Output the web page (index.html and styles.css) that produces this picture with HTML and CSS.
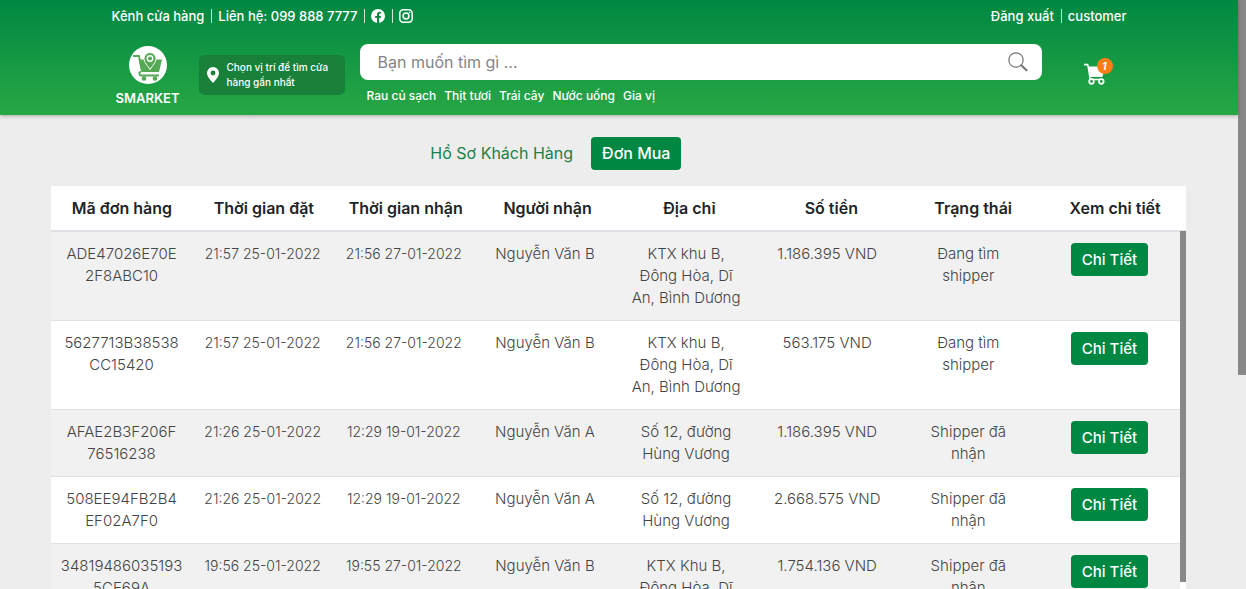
FILE: index.html
```html
<!DOCTYPE html>
<html lang="vi">
<head>
  <meta charset="UTF-8">
  <meta name="viewport" content="width=device-width, initial-scale=1">
  <title>SMARKET - Đơn Mua</title>
  <link rel="stylesheet" href="styles.css">
</head>
<body>
  <div class="page">
    <header class="header">
      <div class="grid">
        <nav class="navbar">
          <ul class="navbar-list">
            <li class="navbar-item"><a href="#">Kênh cửa hàng</a></li>
            <li class="navbar-item"><a href="#">Liên hệ: 099 888 7777</a></li>
            <li class="navbar-item">
              <a href="#" aria-label="Facebook">
                <svg class="navbar-icon" viewBox="0 0 14 14"><circle cx="7" cy="7" r="7" fill="#fff"/><path d="M6 14V9H4.200V7H6V5.500C6 3.700 7 2.800 8.600 2.800l1.400.1v1.700h-.9c-.8 0-1 .5-1 1V7h1.900l-.3 2H8.100v5z" fill="#078b43"/></svg>
              </a>
            </li>
            <li class="navbar-item">
              <a href="#" aria-label="Instagram">
                <svg class="navbar-icon" viewBox="0 0 14 14" fill="none" stroke="#fff" stroke-width="1.500"><rect x=".8" y=".8" width="12.400" height="12.400" rx="3.500"/><circle cx="7" cy="7" r="2.900"/><circle cx="10.600" cy="3.400" r=".9" fill="#fff" stroke="none"/></svg>
              </a>
            </li>
          </ul>
          <ul class="navbar-list">
            <li class="navbar-item"><a href="#">Đăng xuất</a></li>
            <li class="navbar-item"><a href="#">customer</a></li>
          </ul>
        </nav>

        <div class="header-main">
          <a href="#" class="logo">
            <svg class="logo-img" viewBox="0 0 38 38">
              <circle cx="19" cy="19" r="19" fill="#fff"/>
              <path d="M4 10h6l3 15" fill="none" stroke="#55a954" stroke-width="1.800"/>
              <path d="M9.500 13.500H16l4 8 5-8h8L30 26H12.500z" fill="#55a954"/>
              <path d="M12 26h-1c-1.500 1-.5 3.500 1 3.500h18" fill="none" stroke="#55a954" stroke-width="1.800"/>
              <path d="M21 23.500c-2.500-4-6-7-6-11a6 6 0 0 1 12 0c0 4-3.500 7-6 11z" fill="#55a954" stroke="#fff"/>
              <circle cx="21" cy="12.500" r="2.700" fill="none" stroke="#fff" stroke-width="1.400"/>
              <circle cx="15" cy="32.500" r="2.300" fill="#55a954"/>
              <circle cx="26" cy="32.500" r="2.300" fill="#55a954"/>
            </svg>
            <span>SMARKET</span>
          </a>
          <button type="button" class="location">
            <svg class="location-icon" viewBox="0 0 12 16"><path d="M6 0a6 6 0 0 0-6 6c0 3.500 3 6.500 6 10 3-3.500 6-6.500 6-10a6 6 0 0 0-6-6zm0 3.600a2.400 2.400 0 1 1 0 4.800 2.400 2.400 0 0 1 0-4.800z" fill="#fff" fill-rule="evenodd"/></svg>
            <span>Chọn vị trí để tìm cửa<br>hàng gần nhất</span>
          </button>
          <div class="search">
            <form class="search-box">
              <input type="text" class="search-input" placeholder="Bạn muốn tìm gì ..." aria-label="Tìm kiếm">
              <button type="button" class="search-btn" aria-label="Tìm">
                <svg viewBox="0 0 20 20" fill="none" stroke="#777"><circle cx="8" cy="8" r="7.200" stroke-width="1.200"/><path d="M13.300 13.300l5.200 5" stroke-width="2.200" stroke-linecap="round"/></svg>
              </button>
            </form>
            <div class="keywords">
              <a href="#">Rau củ sạch</a>
              <a href="#">Thịt tươi</a>
              <a href="#">Trái cây</a>
              <a href="#">Nước uống</a>
              <a href="#">Gia vị</a>
            </div>
          </div>
          <div class="cart">
            <a href="#" class="cart-link" aria-label="Giỏ hàng">
              <svg class="cart-icon" viewBox="0 0 22 22"><path d="M0 .8h4.200l.8 2.700h16l-2.200 9.300c-.2.800-.7 1.200-1.500 1.200H6.400l.4 1.700h11.500v1.500H5.600L3.200 2.500H0z" fill="#fff"/><circle cx="7.500" cy="18.500" r="2.300" fill="#1f9e43" stroke="#fff" stroke-width="1.700"/><circle cx="17.300" cy="18.500" r="2.300" fill="#1f9e43" stroke="#fff" stroke-width="1.700"/></svg>
              <span class="cart-count">1</span>
            </a>
          </div>
        </div>
      </div>
    </header>

    <main class="content">
      <div class="tabs">
        <a href="#" class="btn btn-link">Hồ Sơ Khách Hàng</a>
        <a href="#" class="btn btn-green">Đơn Mua</a>
      </div>

      <div class="table-wrapper">
        <table class="orders">
          <thead>
            <tr>
              <th>Mã đơn hàng</th>
              <th>Thời gian đặt</th>
              <th>Thời gian nhận</th>
              <th>Người nhận</th>
              <th>Địa chỉ</th>
              <th>Số tiền</th>
              <th>Trạng thái</th>
              <th>Xem chi tiết</th>
            </tr>
          </thead>
          <tbody>
            <tr>
              <td>ADE47026E70E<wbr>2F8ABC10</td>
              <td class="time">21:57 25-01-2022</td>
              <td class="time">21:56 27-01-2022</td>
              <td>Nguyễn Văn B</td>
              <td>KTX khu B,<br>Đông Hòa, Dĩ<br>An, Bình Dương</td>
              <td>1.186.395 VND</td>
              <td>Đang tìm<br>shipper</td>
              <td><button type="button" class="btn btn-green">Chi Tiết</button></td>
            </tr>
            <tr>
              <td>5627713B38538<wbr>CC15420</td>
              <td class="time">21:57 25-01-2022</td>
              <td class="time">21:56 27-01-2022</td>
              <td>Nguyễn Văn B</td>
              <td>KTX khu B,<br>Đông Hòa, Dĩ<br>An, Bình Dương</td>
              <td>563.175 VND</td>
              <td>Đang tìm<br>shipper</td>
              <td><button type="button" class="btn btn-green">Chi Tiết</button></td>
            </tr>
            <tr>
              <td>AFAE2B3F206F<wbr>76516238</td>
              <td class="time">21:26 25-01-2022</td>
              <td class="time">12:29 19-01-2022</td>
              <td>Nguyễn Văn A</td>
              <td>Số 12, đường<br>Hùng Vương</td>
              <td>1.186.395 VND</td>
              <td>Shipper đã<br>nhận</td>
              <td><button type="button" class="btn btn-green">Chi Tiết</button></td>
            </tr>
            <tr>
              <td>508EE94FB2B4<wbr>EF02A7F0</td>
              <td class="time">21:26 25-01-2022</td>
              <td class="time">12:29 19-01-2022</td>
              <td>Nguyễn Văn A</td>
              <td>Số 12, đường<br>Hùng Vương</td>
              <td>2.668.575 VND</td>
              <td>Shipper đã<br>nhận</td>
              <td><button type="button" class="btn btn-green">Chi Tiết</button></td>
            </tr>
            <tr>
              <td>34819486035193<wbr>5CE69A</td>
              <td class="time">19:56 25-01-2022</td>
              <td class="time">19:55 27-01-2022</td>
              <td>Nguyễn Văn B</td>
              <td>KTX Khu B,<br>Đông Hòa, Dĩ<br>An, Bình Dương</td>
              <td>1.754.136 VND</td>
              <td>Shipper đã<br>nhận</td>
              <td><button type="button" class="btn btn-green">Chi Tiết</button></td>
            </tr>
          </tbody>
        </table>
        <div class="table-scroll"></div>
      </div>
    </main>
  </div>
  <div class="page-scroll"><div class="page-scroll-thumb"></div></div>
</body>
</html>
```
FILE: styles.css
```css
* {
  box-sizing: border-box;
}
body {
  display: flex;
  height: 100vh;
  margin: 0;
  overflow: hidden;
  background: #ededed;
  color: #212529;
  font-family: Inter, "Open Sans", sans-serif;
  font-size: 15px;
  line-height: 22px;
}
a {
  color: inherit;
  text-decoration: none;
}
button,
input {
  font: inherit;
}
.page {
  flex: 1;
  min-width: 0;
}

/* header */
.header {
  position: relative;
  height: 115px;
  background: linear-gradient(#008842, #28a745);
  box-shadow: 0 1px 4px rgba(0, 0, 0, 0.3);
  color: #fff;
}
.grid {
  max-width: 1015px;
  margin: 0 auto;
}
.navbar {
  display: flex;
  justify-content: space-between;
  padding-top: 9px;
  font-size: 13px;
  font-weight: 500;
  line-height: 14px;
}
.navbar-list {
  display: flex;
  margin: 0;
  padding: 0;
  list-style: none;
}
.navbar-item + .navbar-item {
  margin-left: 7px;
  padding-left: 6px;
  border-left: 1px solid rgba(255, 255, 255, 0.8);
}
.navbar-icon {
  display: block;
  width: 14px;
  height: 14px;
}
.header-main {
  display: flex;
  gap: 15px;
  padding-top: 21px;
}
.logo {
  display: flex;
  flex-direction: column;
  align-items: center;
  gap: 5px;
  width: 72px;
  padding-top: 2px;
  font-size: 13px;
  font-weight: 600;
  line-height: 18px;
}
.logo-img {
  width: 38px;
  height: 38px;
}
.location {
  display: flex;
  align-items: center;
  gap: 8px;
  width: 146px;
  height: 40px;
  margin-top: 11px;
  padding: 0 8px;
  border: 0;
  border-radius: 6px;
  background: #188039;
  color: #fff;
  font-size: 10px;
  font-weight: 500;
  line-height: 15px;
  text-align: left;
  white-space: nowrap;
}
.location-icon {
  flex: none;
  width: 12px;
  height: 16px;
}
.search {
  flex: 1;
}
.search-box {
  display: flex;
  align-items: center;
  height: 36px;
  padding: 0 14px 0 18px;
  border-radius: 8px;
  background: #fff;
}
.search-input {
  flex: 1;
  min-width: 0;
  padding: 0;
  border: 0;
  outline: 0;
  background: none;
  font-size: 16px;
}
.search-input::placeholder {
  color: #858585;
}
.search-btn {
  width: 20px;
  height: 20px;
  padding: 0;
  border: 0;
  background: none;
}
.search-btn svg {
  display: block;
}
.keywords {
  display: flex;
  gap: 8px;
  padding: 5px 7px;
  font-size: 12px;
  font-weight: 500;
}
.cart {
  width: 70px;
  padding: 19px 0 0 27px;
}
.cart-link {
  display: block;
  position: relative;
  width: 22px;
}
.cart-icon {
  display: block;
  width: 22px;
  height: 22px;
}
.cart-count {
  position: absolute;
  top: -5px;
  left: 13px;
  width: 16px;
  height: 16px;
  border-radius: 50%;
  background: #fd7e14;
  font-size: 10px;
  font-style: italic;
  font-weight: 700;
  line-height: 16px;
  text-align: center;
}

/* content */
.content {
  padding: 22px 52px 0 51px;
}
.tabs {
  display: flex;
  justify-content: center;
  gap: 7px;
  margin-right: 12%;
  padding-bottom: 16px;
}
.btn {
  display: inline-block;
  height: 33px;
  padding: 5px 11px;
  border: 0;
  border-radius: 4px;
  font-weight: 500;
  line-height: 22px;
  white-space: nowrap;
}
.tabs .btn {
  font-size: 16px;
}
.tabs .btn-link {
  color: #1c7f49;
  font-weight: 400;
}
.btn-green {
  background: #008741;
  color: #fff;
}
.table-wrapper {
  position: relative;
  background: #fff;
}
.orders,
.orders tbody {
  display: block;
}
.orders thead,
.orders tbody tr {
  display: table;
  width: 100%;
  table-layout: fixed;
  border-collapse: collapse;
}
.orders tbody tr {
  width: calc(100% - 6px);
}
.orders th,
.orders td {
  padding: 11px 8px;
  text-align: center;
  vertical-align: top;
}
.orders th {
  border-bottom: 2px solid #dee2e6;
  font-size: 16px;
  font-weight: 600;
}
.orders td {
  border-top: 1px solid #dee2e6;
  color: #444;
  font-weight: 300;
}
.orders tbody tr:first-child td {
  border-top: 0;
}
.orders .time {
  font-size: 14px;
}
.orders tbody tr:nth-child(odd) {
  background: #f1f1f1;
}
.table-scroll {
  position: absolute;
  top: 45px;
  right: 0;
  width: 6px;
  height: 351px;
  background: #888;
}
.page-scroll {
  width: 8px;
}
.page-scroll-thumb {
  height: 375px;
  background: #888;
}
```
